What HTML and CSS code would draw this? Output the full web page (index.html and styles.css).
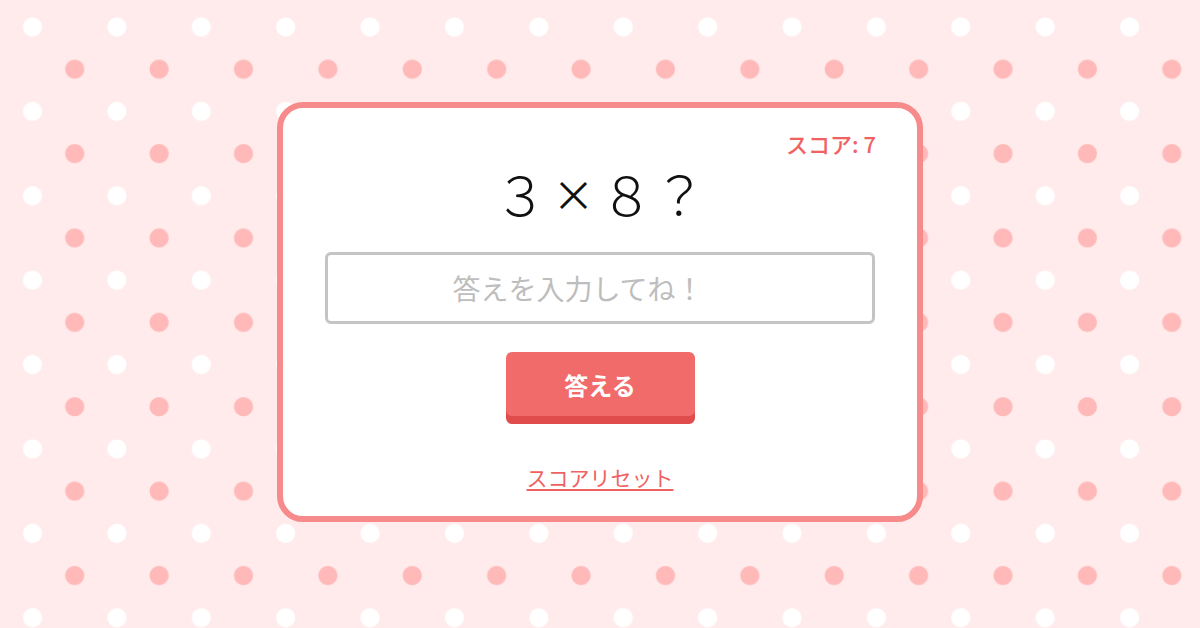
FILE: index.html
```html
<!DOCTYPE html>
<html lang="ja">
<head>
    <meta charset="UTF-8">
    <meta name="viewport" content="width=device-width, initial-scale=1.0">
    <title>かけ算クイズ</title>
    <link rel="stylesheet" href="styles.css">
</head>
<body>
    <div class="page">
        <!-- Quiz card -->
        <div class="quiz-card">
            <div class="score">スコア: 7</div>
            <div class="question">
                <span class="cell">３</span>
                <span class="cell times">×</span>
                <span class="cell">８</span>
                <span class="cell">？</span>
            </div>
            <form id="answerForm" class="answer-form">
                <input type="text" id="answer" class="answer-input" placeholder="答えを入力してね！">
                <button type="submit" class="answer-button">答える</button>
            </form>
            <a href="#" id="resetScore" class="reset-link">スコアリセット</a>
        </div>
    </div>
</body>
</html>
```

FILE: styles.css
```css
html, body {
    margin: 0;
    padding: 0;
    height: 100%;
}

body {
    font-family: "Noto Sans CJK JP", "Noto Sans", sans-serif;
    background-color: #ffebeb;
    background-image:
        radial-gradient(circle at 32.5px 27px, #ffffff 9px, transparent 10px),
        radial-gradient(circle at 74.7px 69.2px, #ffb9b9 9px, transparent 10px);
    background-size: 84.4px 84.4px;
    overflow: hidden;
}

.page {
    padding-top: 102px;
}

.quiz-card {
    width: 646px;
    height: 420px;
    box-sizing: border-box;
    margin: 0 auto;
    padding: 22px 41px 25px;
    background-color: #fff;
    border: 6px solid #f78a8a;
    border-radius: 26px;
    display: flex;
    flex-direction: column;
    align-items: center;
}

.score {
    align-self: stretch;
    text-align: right;
    font-size: 22px;
    line-height: 26px;
    font-weight: 500;
    color: #f06262;
}

.question {
    margin-top: 7px;
    display: flex;
    height: 60px;
    align-items: center;
    font-size: 53px;
    line-height: 60px;
    font-weight: 300;
    color: #111;
}

.question .cell {
    width: 53px;
    text-align: center;
}

.question .times {
    font-size: 42px;
    font-weight: 400;
}

.answer-form {
    display: flex;
    flex-direction: column;
    align-items: center;
    margin: 0;
}

.answer-input {
    margin-top: 29px;
    width: 550px;
    height: 72px;
    box-sizing: border-box;
    padding: 0 44px 0 0;
    border: 3px solid #c4c4c4;
    border-radius: 6px;
    font-family: inherit;
    font-size: 28px;
    text-align: center;
    color: #333;
    outline: none;
}

.answer-input::placeholder {
    color: #bdbdbd;
}

.answer-button {
    margin-top: 28px;
    width: 189px;
    height: 64px;
    border: none;
    border-radius: 6px;
    background-color: #f26b6b;
    box-shadow: 0 8px 0 #e04b4b;
    color: #fff;
    font-family: inherit;
    font-size: 24px;
    font-weight: 700;
    cursor: pointer;
}

.reset-link {
    margin-top: 47px;
    font-size: 21px;
    line-height: 28px;
    color: #f06262;
    text-decoration: underline;
    text-underline-offset: 3px;
}
```
